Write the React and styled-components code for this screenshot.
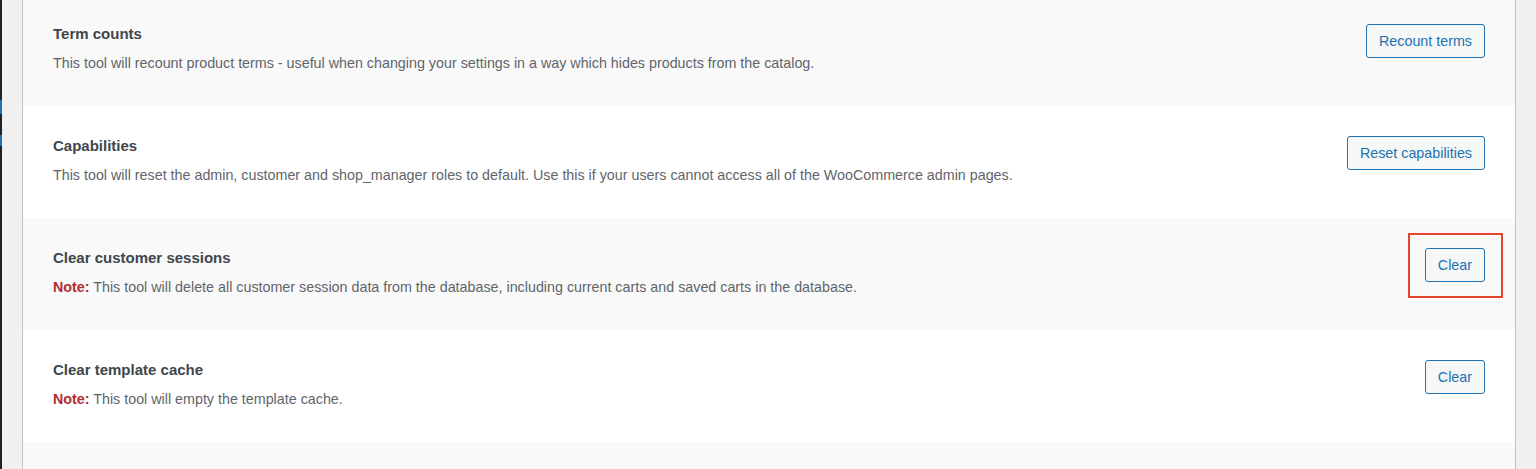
import styled, { createGlobalStyle } from 'styled-components'

const GlobalStyle = createGlobalStyle`
  html, body {
    margin: 0;
    padding: 0;
    background: #f0f0f1;
    overflow: hidden;
  }
  body {
    font-family: "Liberation Sans", Arial, sans-serif;
  }
`

const tools = [
  {
    id: 'recount_terms',
    name: 'Term counts',
    desc: 'This tool will recount product terms - useful when changing your settings in a way which hides products from the catalog.',
    button: 'Recount terms',
  },
  {
    id: 'reset_roles',
    name: 'Capabilities',
    desc: 'This tool will reset the admin, customer and shop_manager roles to default. Use this if your users cannot access all of the WooCommerce admin pages.',
    button: 'Reset capabilities',
  },
  {
    id: 'clear_sessions',
    name: 'Clear customer sessions',
    note: true,
    desc: 'This tool will delete all customer session data from the database, including current carts and saved carts in the database.',
    button: 'Clear',
    highlight: true,
  },
  {
    id: 'clear_template_cache',
    name: 'Clear template cache',
    note: true,
    desc: 'This tool will empty the template cache.',
    button: 'Clear',
  },
  { id: 'next', empty: true },
]

export default function App() {
  return (
    <>
      <GlobalStyle />
      <Page>
        <AdminEdge />
        <Wrap>
          <ToolsTable>
            {tools.map((t, i) => (
              <Row key={t.id} $striped={i % 2 === 0}>
                {!t.empty && (
                  <>
                    <Info>
                      <Title>{t.name}</Title>
                      <Desc>
                        {t.note && <Note>Note:</Note>}
                        {t.note ? ' ' : ''}
                        {t.desc}
                      </Desc>
                    </Info>
                    <Action>
                      <ButtonWrap $highlight={t.highlight}>
                        <Button type="button">{t.button}</Button>
                      </ButtonWrap>
                    </Action>
                  </>
                )}
              </Row>
            ))}
          </ToolsTable>
        </Wrap>
      </Page>
    </>
  )
}

const Page = styled.div`
  display: flex;
  width: 1536px;
  height: 469px;
  overflow: hidden;
`

const AdminEdge = styled.div`
  flex: 0 0 2px;
  background: linear-gradient(
    to bottom,
    #1d2327 0,
    #1d2327 100px,
    #2271b1 100px,
    #2271b1 114px,
    #1d2327 114px,
    #1d2327 135px,
    #2271b1 135px,
    #2271b1 146px,
    #1d2327 146px
  );
`

const Wrap = styled.div`
  flex: 1;
  padding: 0 20px;
  margin-top: -6px;
`

const ToolsTable = styled.div`
  border-left: 1px solid #c3c4c7;
  border-right: 1px solid #c3c4c7;
  background: #fff;
`

const Row = styled.div`
  display: grid;
  grid-template-columns: 1fr auto;
  align-items: start;
  height: 112px;
  box-sizing: border-box;
  padding: 30px 30px 0;
  background: ${(p) => (p.$striped ? '#f9f9f9' : '#fff')};
`

const Info = styled.div`
  display: flex;
  flex-direction: column;
  gap: 9px;
`

const Title = styled.div`
  font-size: 15px;
  font-weight: 700;
  line-height: 20px;
  color: #40464c;
`

const Desc = styled.div`
  font-size: 14.3px;
  line-height: 20px;
  color: #5f656b;
`

const Note = styled.strong`
  color: #b32d2e;
  font-weight: 700;
`

const Action = styled.div`
  display: flex;
  justify-content: flex-end;
`

const ButtonWrap = styled.span`
  position: relative;
  display: inline-flex;

  ${(p) =>
    p.$highlight &&
    `
    &::after {
      content: '';
      position: absolute;
      top: -15px;
      bottom: -16px;
      left: -17px;
      right: -18px;
      border: 2px solid #e5432f;
      pointer-events: none;
    }
  `}
`

const Button = styled.button`
  height: 34px;
  padding: 0 12px;
  border: 1px solid #2271b1;
  border-radius: 3px;
  background: #f6f7f7;
  color: #2271b1;
  font-family: "Liberation Sans", Arial, sans-serif;
  font-size: 14.3px;
  line-height: 32px;
  cursor: pointer;
  white-space: nowrap;
`
